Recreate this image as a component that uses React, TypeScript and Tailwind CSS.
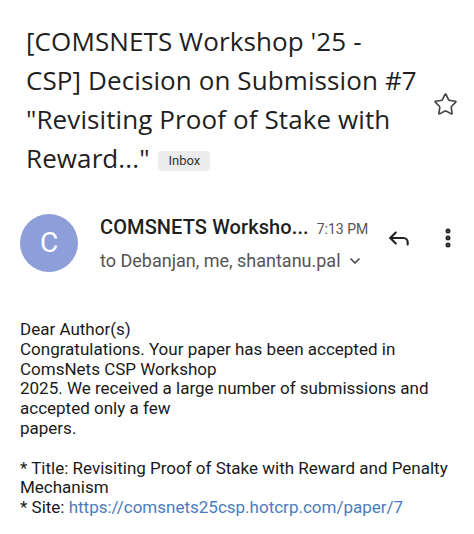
import { Star, Reply, EllipsisVertical, ChevronDown } from 'lucide-react';

export default function App() {
  return (
    <div className="w-[474px] h-[534px] bg-white text-[#1f1f1f] overflow-hidden" style={{ fontFamily: 'Roboto, "Liberation Sans", sans-serif' }}>
      {/* subject */}
      <div className="flex items-center pl-[26px] pr-[16px] pt-[22px]">
        <h1 className="flex-1 text-[26px] leading-[39px] font-normal tracking-[0.1px]" style={{ fontFamily: '"Open Sans", Roboto, sans-serif' }}>
          [COMSNETS Workshop '25 -<br />
          CSP] Decision on Submission #7<br />
          "Revisiting Proof of Stake with<br />
          Reward..."{' '}
          <span className="inline-block align-[3px] ml-[2px] px-[10px] h-[20px] leading-[20px] rounded-[4px] bg-[#ececec] text-[13px] text-[#333] tracking-normal" style={{ fontFamily: 'Roboto, sans-serif' }}>
            Inbox
          </span>
        </h1>
        <Star className="w-[25px] h-[25px] text-[#444] ml-2 mt-[8px]" strokeWidth={1.6} />
      </div>

      {/* sender row */}
      <div className="flex items-center pl-[20px] pr-[14px] mt-[34px]">
        <div className="w-[58px] h-[58px] rounded-full bg-[#8e9ed8] flex items-center justify-center text-white text-[28px] font-normal shrink-0">
          C
        </div>
        <div className="flex-1 ml-[22px]">
          <div className="flex items-baseline gap-[8px]">
            <span className="text-[20px] font-medium tracking-[0.1px]">COMSNETS Worksho...</span>
            <span className="text-[14px] text-[#555]">7:13 PM</span>
          </div>
          <div className="flex items-center mt-[5px] text-[18px] text-[#555]">
            <span>to Debanjan, me, shantanu.pal</span>
            <ChevronDown className="w-[16px] h-[16px] ml-[6px] text-[#444]" strokeWidth={2.5} />
          </div>
        </div>
        <Reply className="w-[26px] h-[26px] text-[#222] mr-[24px] -mt-[10px]" strokeWidth={2} />
        <EllipsisVertical className="w-[24px] h-[24px] text-[#222] -mt-[10px]" strokeWidth={3} />
      </div>

      {/* body */}
      <div className="px-[20px] mt-[46px] text-[17px] leading-[19.8px] text-[#1a1a1a]">
        <p>Dear Author(s)</p>
        <p>Congratulations. Your paper has been accepted in</p>
        <p>ComsNets CSP Workshop</p>
        <p>2025. We received a large number of submissions and</p>
        <p>accepted only a few</p>
        <p>papers.</p>
        <p className="h-[19.8px]"></p>
        <p>* Title: Revisiting Proof of Stake with Reward and Penalty Mechanism</p>
        <p>
          * Site: <span className="text-[#4a7cc0]">https://comsnets25csp.hotcrp.com/paper/7</span>
        </p>
      </div>
    </div>
  );
}
